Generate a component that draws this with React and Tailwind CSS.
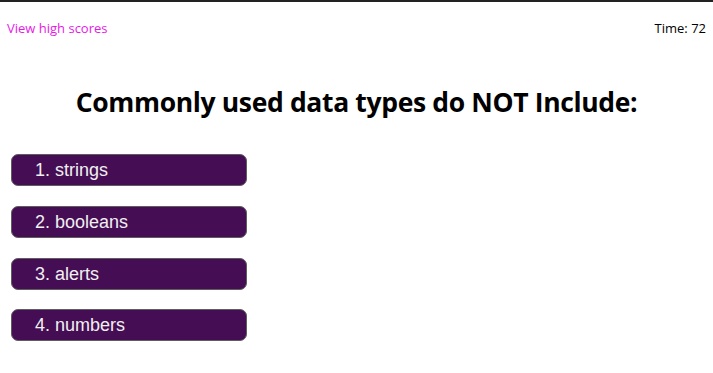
const CHOICES = ['1. strings', '2. booleans', '3. alerts', '4. numbers']

export default function App() {
  return (
    <div className="min-h-[373px] bg-white border-t-2 border-[#222222] font-['Open_Sans',sans-serif]">
      <header className="flex justify-between items-center px-[7px] pt-[17px] text-[13px]">
        <a className="text-[#e619e6] cursor-pointer">View high scores</a>
        <span className="text-black">Time: 72</span>
      </header>

      <h1 className="text-center text-[26.5px] font-bold text-black mt-[44px] tracking-[-0.35px]">
        Commonly used data types do NOT Include:
      </h1>

      <div className="flex flex-col gap-[19.7px] mt-[32px] pl-[11px]">
        {CHOICES.map(c => (
          <button key={c}
            className="w-[236px] h-[32px] rounded-[7px] border border-[#5e5e5e] bg-[#450d54] text-left pl-[23px] pt-[1px] text-[18px] text-[#f0f0f0] font-['Liberation_Sans',Arial,sans-serif]">
            {c}
          </button>
        ))}
      </div>
    </div>
  )
}
